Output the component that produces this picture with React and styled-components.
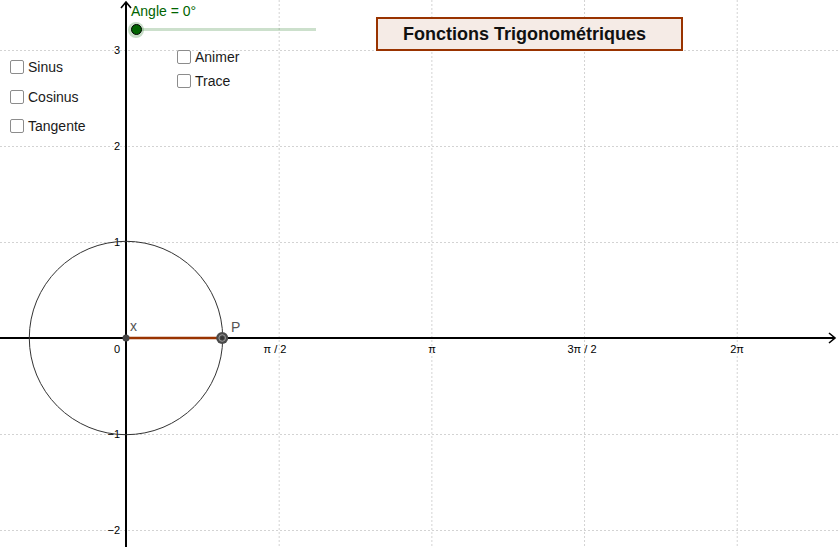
import React from "react";
import styled, { createGlobalStyle } from "styled-components";

const GlobalStyle = createGlobalStyle`
  html, body {
    margin: 0;
    padding: 0;
    background: #ffffff;
    overflow: hidden;
  }
  body {
    font-family: "Liberation Sans", Arial, sans-serif;
  }
`;

// graph geometry
const OX = 126;
const OY = 338;
const UX = 97.2;
const UY = 96;
const W = 838;
const H = 547;

const Canvas = styled.div`
  position: relative;
  width: ${W}px;
  height: ${H}px;
  overflow: hidden;
  background: #fff;
`;

const Graph = styled.svg`
  display: block;
  font-family: "Liberation Sans", Arial, sans-serif;
`;

const Widget = styled.div`
  position: absolute;
  left: ${(p) => p.x}px;
  top: ${(p) => p.y}px;
`;

const CheckList = styled(Widget)`
  display: flex;
  flex-direction: column;
  gap: ${(p) => p.gap}px;
`;

const CheckRow = styled.label`
  display: flex;
  align-items: center;
  gap: 4px;
  height: 16px;
  font-size: 14px;
  color: #1a1a1a;
  cursor: pointer;
  user-select: none;
`;

const Box = styled.span`
  box-sizing: border-box;
  width: 14px;
  height: 14px;
  border: 1.5px solid #8c8c8c;
  border-radius: 2px;
  background: #fff;
`;

const TitleBox = styled(Widget)`
  box-sizing: border-box;
  width: 307px;
  height: 34px;
  padding-left: 25px;
  border: 2px solid #993300;
  background: #f5ebe6;
  font-size: 18px;
  font-weight: bold;
  line-height: 30px;
  color: #111;
  white-space: nowrap;
`;

const SliderLabel = styled.div`
  font-size: 14px;
  line-height: 16px;
  color: #006400;
`;

const Track = styled.div`
  position: relative;
  margin: 9px 0 0 5px;
  width: 180px;
  height: 3px;
  background: rgba(0, 100, 0, 0.2);
`;

const Knob = styled.span`
  position: absolute;
  left: -8px;
  top: -6.5px;
  box-sizing: border-box;
  width: 16px;
  height: 16px;
  border-radius: 50%;
  background: rgba(0, 100, 0, 0.22);
  &::after {
    content: "";
    position: absolute;
    left: 2.5px;
    top: 2.5px;
    box-sizing: border-box;
    width: 11px;
    height: 11px;
    border-radius: 50%;
    background: #006400;
    border: 1px solid #000;
  }
`;

function Check({ label }) {
  return (
    <CheckRow>
      <Box />
      {label}
    </CheckRow>
  );
}

const xTicks = [
  { v: Math.PI / 2, label: "π / 2" },
  { v: Math.PI, label: "π" },
  { v: (3 * Math.PI) / 2, label: "3π / 2" },
  { v: 2 * Math.PI, label: "2π" },
];
const yTicks = [3, 2, 1, -1, -2];

function Axes() {
  const gx = (v) => OX + v * UX;
  const gy = (v) => OY - v * UY;
  return (
    <Graph width={W} height={H} viewBox={`0 0 ${W} ${H}`}>
      <g stroke="#d3d3d3" strokeWidth="1" strokeDasharray="2 2">
        {yTicks.map((v) => (
          <line key={v} x1="0" x2={W} y1={gy(v) + 0.5} y2={gy(v) + 0.5} />
        ))}
        {xTicks.map((t) => (
          <line key={t.label} x1={gx(t.v) + 0.5} x2={gx(t.v) + 0.5} y1="0" y2={H} />
        ))}
      </g>

      <g stroke="#000" strokeWidth="2" fill="none">
        <line x1="0" x2="834" y1={OY} y2={OY} />
        <polyline points={`829,${OY - 5} 835,${OY} 829,${OY + 5}`} strokeWidth="1.6" />
        <line x1={OX} x2={OX} y1="2" y2={H} />
        <polyline points={`${OX - 5},8 ${OX},2 ${OX + 5},8`} strokeWidth="1.6" />
      </g>

      <g fontSize="11" fill="#000">
        {yTicks.map((v) => (
          <text key={v} x={OX - 6} y={gy(v) + 4} textAnchor="end">
            {v < 0 ? `\u2212${-v}` : v}
          </text>
        ))}
        <text x={OX - 6} y={OY + 15} textAnchor="end">0</text>
        {xTicks.map((t, i) => (
          <text key={t.label} x={[275, 432, 582, 737][i]} y={OY + 15} textAnchor="middle">
            {t.label}
          </text>
        ))}
      </g>

      <circle cx={OX} cy={OY} r={UX * 0.995} fill="none" stroke="#333" strokeWidth="1" />
      <line x1={OX} x2={OX + UX - 1} y1={OY} y2={OY} stroke="#993300" strokeWidth="2.5" />

      <circle cx={OX} cy={OY} r="3.5" fill="#444" />
      <circle cx={OX + UX - 1} cy={OY} r="6" fill="#4a4a4a" />
      <circle cx={OX + UX - 1} cy={OY} r="3.3" fill="none" stroke="#9a9a9a" strokeWidth="1" />
      <circle cx={OX + UX - 1} cy={OY} r="1.8" fill="#333" />

      <g fontSize="14" fill="#555">
        <text x="130" y="331">x</text>
        <text x="231" y="332">P</text>
      </g>
    </Graph>
  );
}

export default function App() {
  return (
    <>
      <GlobalStyle />
      <Canvas>
        <Axes />

        <Widget x={131} y={3}>
          <SliderLabel>Angle = 0°</SliderLabel>
          <Track>
            <Knob />
          </Track>
        </Widget>

        <TitleBox x={376} y={17}>Fonctions Trigonométriques</TitleBox>

        <CheckList x={10} y={59} gap={13.5}>
          <Check label="Sinus" />
          <Check label="Cosinus" />
          <Check label="Tangente" />
        </CheckList>

        <CheckList x={177} y={49} gap={8}>
          <Check label="Animer" />
          <Check label="Trace" />
        </CheckList>
      </Canvas>
    </>
  );
}
